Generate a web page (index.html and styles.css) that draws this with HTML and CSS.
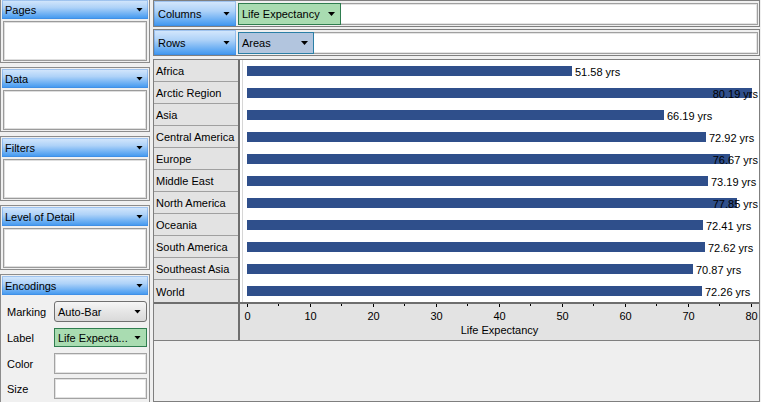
FILE: index.html
```html
<!DOCTYPE html>
<html>
<head>
<meta charset="utf-8">
<title>Life Expectancy</title>
<link rel="stylesheet" href="styles.css">
</head>
<body>
<div class="app">
  <div class="side">
    <div class="sect">
      <div class="sh"><span>Pages</span><span class="arrow"></span></div>
      <div class="sbox"></div>
    </div>
    <div class="sect">
      <div class="sh"><span>Data</span><span class="arrow"></span></div>
      <div class="sbox"></div>
    </div>
    <div class="sect">
      <div class="sh"><span>Filters</span><span class="arrow"></span></div>
      <div class="sbox"></div>
    </div>
    <div class="sect">
      <div class="sh"><span>Level of Detail</span><span class="arrow"></span></div>
      <div class="sbox"></div>
    </div>
    <div class="sect enc">
      <div class="sh"><span>Encodings</span><span class="arrow"></span></div>
      <div class="enc-body">
        <div class="er er-marking"><span class="el">Marking</span><div class="ctl select"><span>Auto-Bar</span><span class="arrow"></span></div></div>
        <div class="er er-label"><span class="el">Label</span><div class="ctl green"><span>Life Expecta...</span><span class="arrow"></span></div></div>
        <div class="er er-color"><span class="el">Color</span><div class="ctl blank"></div></div>
        <div class="er er-size"><span class="el">Size</span><div class="ctl blank"></div></div>
      </div>
    </div>
  </div>

  <div class="main">
    <div class="shelf">
      <div class="shh"><span>Columns</span><span class="arrow"></span></div>
      <div class="drop"><div class="pill pill-green pill-cols"><span>Life Expectancy</span><span class="arrow"></span></div></div>
    </div>
    <div class="shelf shelf-rows">
      <div class="shh"><span>Rows</span><span class="arrow"></span></div>
      <div class="drop"><div class="pill pill-blue pill-rows"><span>Areas</span><span class="arrow"></span></div></div>
    </div>

    <div class="chart">
      <div class="grid-top">
        <div class="labels">
          <div class="lab">Africa</div>
          <div class="lab">Arctic Region</div>
          <div class="lab">Asia</div>
          <div class="lab">Central America</div>
          <div class="lab">Europe</div>
          <div class="lab">Middle East</div>
          <div class="lab">North America</div>
          <div class="lab">Oceania</div>
          <div class="lab">South America</div>
          <div class="lab">Southeast Asia</div>
          <div class="lab">World</div>
        </div>
        <div class="vdiv"></div>
        <div class="plot">
          <div class="plot-in">
            <div class="prow"><div class="bar" style="width:325px"></div><span class="val">51.58 yrs</span></div>
            <div class="prow over"><div class="bar" style="width:505px"></div><span class="val">80.19 yrs</span></div>
            <div class="prow"><div class="bar" style="width:417px"></div><span class="val">66.19 yrs</span></div>
            <div class="prow"><div class="bar" style="width:459px"></div><span class="val">72.92 yrs</span></div>
            <div class="prow over"><div class="bar" style="width:483px"></div><span class="val">76.67 yrs</span></div>
            <div class="prow"><div class="bar" style="width:461px"></div><span class="val">73.19 yrs</span></div>
            <div class="prow over"><div class="bar" style="width:490px"></div><span class="val">77.85 yrs</span></div>
            <div class="prow"><div class="bar" style="width:456px"></div><span class="val">72.41 yrs</span></div>
            <div class="prow"><div class="bar" style="width:458px"></div><span class="val">72.62 yrs</span></div>
            <div class="prow"><div class="bar" style="width:446px"></div><span class="val">70.87 yrs</span></div>
            <div class="prow"><div class="bar" style="width:455px"></div><span class="val">72.26 yrs</span></div>
          </div>
        </div>
      </div>
      <div class="hline"></div>
      <div class="axis-row">
        <div class="axis-left"></div>
        <div class="vdiv"></div>
        <div class="axis">
          <svg width="519" height="36" viewBox="0 0 519 36">
            <g fill="#000">
              <rect x="7" y="0" width="1" height="3"/>
              <rect x="38" y="0" width="1" height="2"/>
              <rect x="70" y="0" width="1" height="3"/>
              <rect x="101" y="0" width="1" height="2"/>
              <rect x="133" y="0" width="1" height="3"/>
              <rect x="164" y="0" width="1" height="2"/>
              <rect x="196" y="0" width="1" height="3"/>
              <rect x="227" y="0" width="1" height="2"/>
              <rect x="259" y="0" width="1" height="3"/>
              <rect x="290" y="0" width="1" height="2"/>
              <rect x="322" y="0" width="1" height="3"/>
              <rect x="353" y="0" width="1" height="2"/>
              <rect x="385" y="0" width="1" height="3"/>
              <rect x="416" y="0" width="1" height="2"/>
              <rect x="448" y="0" width="1" height="3"/>
              <rect x="479" y="0" width="1" height="2"/>
              <rect x="511" y="0" width="1" height="3"/>
            </g>
            <g class="ticklab" text-anchor="middle">
              <text x="7.5" y="16">0</text>
              <text x="70.5" y="16">10</text>
              <text x="133.5" y="16">20</text>
              <text x="196.5" y="16">30</text>
              <text x="259.5" y="16">40</text>
              <text x="322.5" y="16">50</text>
              <text x="385.5" y="16">60</text>
              <text x="448.5" y="16">70</text>
              <text x="511.5" y="16">80</text>
              <text x="259.5" y="30">Life Expectancy</text>
            </g>
          </svg>
        </div>
      </div>
      <div class="hline2"></div>
      <div class="bottom"></div>
    </div>
  </div>
</div>
</body>
</html>
```

FILE: styles.css
```css
* { box-sizing: border-box; }
html, body { margin: 0; padding: 0; overflow: hidden; }
body {
  width: 761px;
  height: 402px;
  background: #f0f0f0;
  font-family: "Liberation Sans", Arial, sans-serif;
  font-size: 11px;
  color: #000;
}
.app { display: flex; gap: 3px; height: 402px; }

/* left side panel */
.side { width: 150px; flex: none; display: flex; flex-direction: column; gap: 4px; margin-top: -2px; }
.sect { height: 65px; flex: none; border: 1px solid #8c8c8c; padding: 1px; }
.sect.enc { height: 131px; }
.sh {
  height: 19px;
  display: flex;
  align-items: center;
  justify-content: space-between;
  padding: 0 5px 0 3px;
  background: linear-gradient(#d6e8fc, #aed2f8 40%, #66acf3 78%, #3e96ef);
  box-shadow: inset 0 0 0 1px rgba(60, 130, 215, 0.35);
  white-space: nowrap;
}
.arrow {
  display: inline-block;
  width: 7px;
  height: 4px;
  background: #000;
  clip-path: polygon(0 0, 100% 0, 50% 100%);
  flex: none;
}
.sbox {
  height: 40px;
  margin: 2px 1px 0;
  background: #fff;
  border: 1px solid #9b9b9b;
  box-shadow: inset 0 0 0 1px #dedede;
}

/* encodings */
.enc-body { padding: 0 0 0 5px; }
.er { display: flex; align-items: center; }
.el { width: 47px; flex: none; }
.ctl {
  width: 93px;
  display: flex;
  align-items: center;
  justify-content: space-between;
  padding: 0 5px 0 3px;
  white-space: nowrap;
}
.er-marking { margin-top: 6px; height: 21px; }
.er-label { margin-top: 6px; height: 19px; }
.er-color { margin-top: 6px; height: 21px; }
.er-size { margin-top: 4px; height: 21px; }
.er .ctl { height: 100%; }
.select {
  border: 1px solid #707070;
  border-radius: 3px;
  background: linear-gradient(#f6f6f6, #e6e6e6 50%, #d9d9d9);
}
.green { background: #a9dcb1; border: 1px solid #2f7d4f; }
.blank { background: #fff; border: 1px solid #a3a3a3; box-shadow: inset 0 0 0 1px #e2e2e2; }

/* main area */
.main { width: 607px; flex: none; display: flex; flex-direction: column; }
.shelf { height: 27px; flex: none; border: 1px solid #7f7f7f; display: flex; }
.shelf-rows { margin-top: 2px; }
.shh {
  width: 82px;
  flex: none;
  display: flex;
  align-items: center;
  justify-content: space-between;
  padding: 0 6px 0 4px;
  background: linear-gradient(#d6e8fc, #aed2f8 40%, #66acf3 78%, #3e96ef);
  box-shadow: inset 0 0 0 1px rgba(60, 130, 215, 0.35);
}
.drop {
  flex: 1;
  margin: 2px 1px 1px 2px;
  background: #fff;
  border: 1px solid #a0a0a0;
  box-shadow: inset 0 0 0 1px #e4e4e4;
  display: flex;
}
.pill {
  margin: -1px 0 -1px -1px;
  display: flex;
  align-items: center;
  justify-content: space-between;
  padding: 0 5px 0 3px;
  white-space: nowrap;
}
.pill-green { background: #a9dcb1; border: 1px solid #2f7d4f; }
.pill-blue { background: #b2c5de; border: 1px solid #2b7fa6; }
.pill-cols { width: 103px; }
.pill-rows { width: 76px; }

/* chart */
.chart {
  margin-top: 3px;
  height: 343px;
  flex: none;
  border: 1px solid #7f7f7f;
  display: flex;
  flex-direction: column;
  background: #efefef;
}
.grid-top { display: flex; height: 242px; flex: none; }
.labels { width: 84px; flex: none; background: #e3e3e3; }
.lab {
  height: 22px;
  border-bottom: 1px solid #a0a0a0;
  padding: 1px 0 0 2px;
  display: flex;
  align-items: center;
  white-space: nowrap;
}
.lab:last-child { border-bottom: 0; }
.vdiv { width: 2px; flex: none; background: #6e6e6e; }
.plot { flex: 1; background: #fff; padding-left: 2px; }
.plot-in { height: 100%; border-left: 1px solid #d6d6d6; padding-left: 4px; }
.prow { height: 22px; display: flex; align-items: center; position: relative; }
.bar { height: 10px; flex: none; background: #2f4f8b; }
.val { margin-left: 3px; padding-top: 2px; white-space: nowrap; }
.prow.over .val { position: absolute; right: 1px; margin: 0; }
.hline { height: 2px; flex: none; background: #6e6e6e; }
.axis-row { height: 36px; flex: none; display: flex; background: #e3e3e3; }
.axis-left { width: 84px; flex: none; }
.axis { flex: 1; }
.axis svg { display: block; }
.ticklab { font-family: "Liberation Sans", Arial, sans-serif; font-size: 11px; fill: #000; }
.hline2 { height: 1px; flex: none; background: #7f7f7f; }
.bottom { flex: 1; background: #efefef; }
```
